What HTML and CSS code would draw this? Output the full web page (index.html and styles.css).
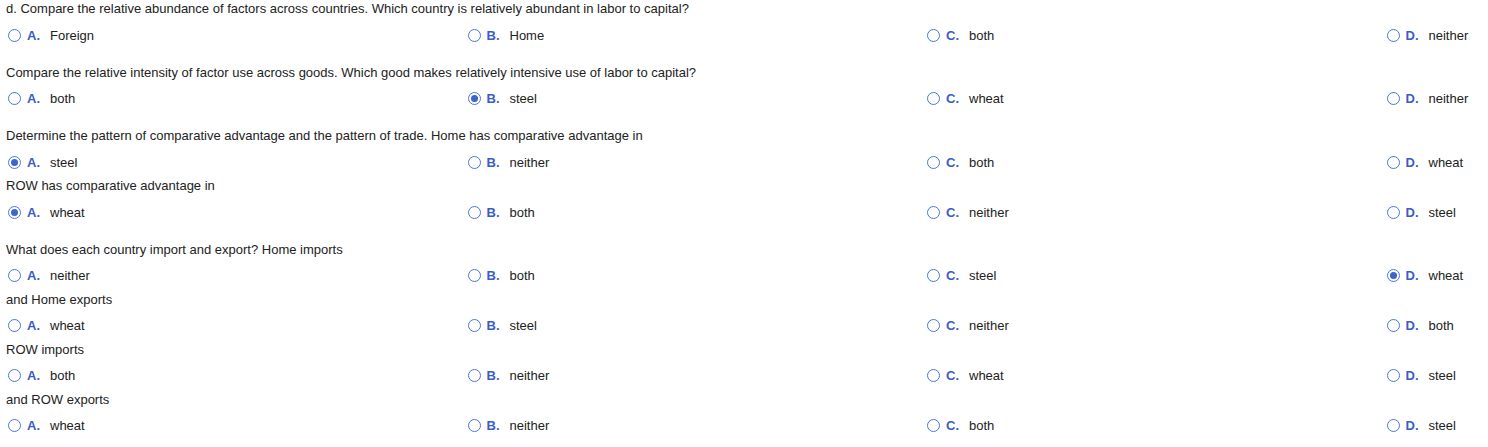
FILE: index.html
```html
<!DOCTYPE html>
<html>
<head>
<meta charset="utf-8">
<link rel="stylesheet" href="styles.css">
</head>
<body>
<div class="page">
  <div class="q first">d. Compare the relative abundance of factors across countries. Which country is relatively abundant in labor to capital?</div>
  <div class="opts">
    <div class="opt"><span class="radio"></span><span class="let">A.</span><span class="txt">Foreign</span></div>
    <div class="opt"><span class="radio"></span><span class="let">B.</span><span class="txt">Home</span></div>
    <div class="opt"><span class="radio"></span><span class="let">C.</span><span class="txt">both</span></div>
    <div class="opt"><span class="radio"></span><span class="let">D.</span><span class="txt">neither</span></div>
  </div>

  <div class="q">Compare the relative intensity of factor use across goods. Which good makes relatively intensive use of labor to capital?</div>
  <div class="opts">
    <div class="opt"><span class="radio"></span><span class="let">A.</span><span class="txt">both</span></div>
    <div class="opt"><span class="radio on"></span><span class="let">B.</span><span class="txt">steel</span></div>
    <div class="opt"><span class="radio"></span><span class="let">C.</span><span class="txt">wheat</span></div>
    <div class="opt"><span class="radio"></span><span class="let">D.</span><span class="txt">neither</span></div>
  </div>

  <div class="q">Determine the pattern of comparative advantage and the pattern of trade. Home has comparative advantage in</div>
  <div class="opts">
    <div class="opt"><span class="radio on"></span><span class="let">A.</span><span class="txt">steel</span></div>
    <div class="opt"><span class="radio"></span><span class="let">B.</span><span class="txt">neither</span></div>
    <div class="opt"><span class="radio"></span><span class="let">C.</span><span class="txt">both</span></div>
    <div class="opt"><span class="radio"></span><span class="let">D.</span><span class="txt">wheat</span></div>
  </div>
  <div class="sub">ROW has comparative advantage in</div>
  <div class="opts">
    <div class="opt"><span class="radio on"></span><span class="let">A.</span><span class="txt">wheat</span></div>
    <div class="opt"><span class="radio"></span><span class="let">B.</span><span class="txt">both</span></div>
    <div class="opt"><span class="radio"></span><span class="let">C.</span><span class="txt">neither</span></div>
    <div class="opt"><span class="radio"></span><span class="let">D.</span><span class="txt">steel</span></div>
  </div>

  <div class="q">What does each country import and export? Home imports</div>
  <div class="opts">
    <div class="opt"><span class="radio"></span><span class="let">A.</span><span class="txt">neither</span></div>
    <div class="opt"><span class="radio"></span><span class="let">B.</span><span class="txt">both</span></div>
    <div class="opt"><span class="radio"></span><span class="let">C.</span><span class="txt">steel</span></div>
    <div class="opt"><span class="radio on"></span><span class="let">D.</span><span class="txt">wheat</span></div>
  </div>
  <div class="sub">and Home exports</div>
  <div class="opts">
    <div class="opt"><span class="radio"></span><span class="let">A.</span><span class="txt">wheat</span></div>
    <div class="opt"><span class="radio"></span><span class="let">B.</span><span class="txt">steel</span></div>
    <div class="opt"><span class="radio"></span><span class="let">C.</span><span class="txt">neither</span></div>
    <div class="opt"><span class="radio"></span><span class="let">D.</span><span class="txt">both</span></div>
  </div>
  <div class="sub">ROW imports</div>
  <div class="opts">
    <div class="opt"><span class="radio"></span><span class="let">A.</span><span class="txt">both</span></div>
    <div class="opt"><span class="radio"></span><span class="let">B.</span><span class="txt">neither</span></div>
    <div class="opt"><span class="radio"></span><span class="let">C.</span><span class="txt">wheat</span></div>
    <div class="opt"><span class="radio"></span><span class="let">D.</span><span class="txt">steel</span></div>
  </div>
  <div class="sub">and ROW exports</div>
  <div class="opts">
    <div class="opt"><span class="radio"></span><span class="let">A.</span><span class="txt">wheat</span></div>
    <div class="opt"><span class="radio"></span><span class="let">B.</span><span class="txt">neither</span></div>
    <div class="opt"><span class="radio"></span><span class="let">C.</span><span class="txt">both</span></div>
    <div class="opt"><span class="radio"></span><span class="let">D.</span><span class="txt">steel</span></div>
  </div>
</div>
</body>
</html>
```

FILE: styles.css
```css
html, body {
  margin: 0;
  padding: 0;
  background: #ffffff;
}
body {
  font-family: "Liberation Sans", Arial, sans-serif;
  font-size: 13px;
  color: #222222;
}
.page {
  padding: 0 6px;
}
.q {
  line-height: 18px;
  height: 18px;
  margin-top: 19.5px;
  white-space: nowrap;
}
.q.first {
  margin-top: 0;
}
.sub {
  line-height: 18px;
  height: 18px;
  margin-top: 6px;
  white-space: nowrap;
}
.opts {
  display: grid;
  grid-template-columns: 459.5px 459.5px 459.5px 1fr;
  margin-top: 8px;
  margin-left: 2px;
  height: 18px;
}
.opt {
  display: flex;
  align-items: center;
  height: 18px;
  white-space: nowrap;
}
.radio {
  box-sizing: border-box;
  width: 13px;
  height: 13px;
  border: 1.3px solid #4b77d9;
  border-radius: 50%;
  margin-right: 6px;
  flex: none;
  position: relative;
}
.radio.on::after {
  content: "";
  position: absolute;
  left: 50%;
  top: 50%;
  width: 7px;
  height: 7px;
  margin: -3.5px 0 0 -3.5px;
  border-radius: 50%;
  background: #3d63cc;
}
.let {
  width: 23px;
  flex: none;
  font-weight: bold;
  color: #3b5cc7;
}
.txt {
  color: #222222;
}
```
